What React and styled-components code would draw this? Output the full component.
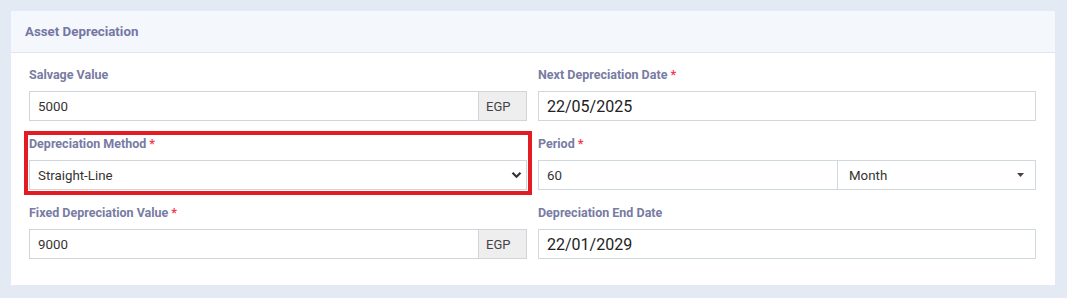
import React from 'react';
import styled, { createGlobalStyle } from 'styled-components';

const GlobalStyle = createGlobalStyle`
  html, body {
    margin: 0;
    padding: 0;
    background: #e4eaf3;
    font-family: Roboto, 'Liberation Sans', Arial, sans-serif;
  }
`;

const Page = styled.div`
  padding: 11px 12px 13px 11px;
`;

const Card = styled.section`
  background: #fff;
`;

const CardHeader = styled.header`
  height: 41px;
  display: flex;
  align-items: center;
  padding: 0 14px;
  background: #f4f8fc;
  border-bottom: 1px solid #e1e7ee;
`;

const Title = styled.h3`
  margin: 0;
  font-size: 13.3px;
  font-weight: 700;
  color: #7477a4;
`;

const CardBody = styled.div`
  display: grid;
  grid-template-columns: 1fr 1fr;
  column-gap: 11px;
  padding: 14px 19px 11px 18px;
`;

const Group = styled.div`
  margin-bottom: 15px;
  ${p =>
    p.$highlight &&
    `
    outline: 4px solid #e31b23;
    outline-offset: 1px;
  `}
`;

const Label = styled.label`
  display: block;
  height: 16px;
  line-height: 16px;
  margin-bottom: 8px;
  font-size: 12.5px;
  font-weight: 700;
  color: #787ba3;
`;

const Req = styled.span`
  color: #ef3b4d;
  margin-left: 3px;
`;

const InputRow = styled.div`
  display: flex;
  height: 30px;
`;

const Field = styled.div`
  flex: ${p => (p.$width ? `0 0 ${p.$width}px` : '1')};
  display: flex;
  align-items: center;
  justify-content: space-between;
  box-sizing: border-box;
  height: 30px;
  padding: 0 ${p => p.$padRight || 8}px 0 8px;
  border: 1px solid ${p => p.$border || '#d0d5dc'};
  margin-left: ${p => (p.$join ? '-1px' : '0')};
  font-size: ${p => (p.$large ? '16px' : '13.3px')};
  color: ${p => (p.$large ? '#222' : '#333')};
  background: #fff;
`;

const Addon = styled.div`
  width: 49px;
  box-sizing: border-box;
  display: flex;
  align-items: center;
  padding-left: 7px;
  margin-left: -1px;
  border: 1px solid #d0d5dc;
  background: #eeeeee;
  font-size: 13px;
  color: #444;
`;

const Chevron = () => (
  <svg width="11" height="8" viewBox="0 0 11 8">
    <path d="M1.5 1.8 L5.5 5.8 L9.5 1.8" fill="none" stroke="#333" strokeWidth="2.2" />
  </svg>
);

const Caret = () => (
  <svg width="7" height="4" viewBox="0 0 7 4">
    <path d="M0 0 H7 L3.5 4 Z" fill="#444" />
  </svg>
);

const App = () => (
  <>
    <GlobalStyle />
    <Page>
      <Card>
        <CardHeader>
          <Title>Asset Depreciation</Title>
        </CardHeader>
        <CardBody>
          <Group>
            <Label>Salvage Value</Label>
            <InputRow>
              <Field>5000</Field>
              <Addon>EGP</Addon>
            </InputRow>
          </Group>
          <Group>
            <Label>
              Next Depreciation Date<Req>*</Req>
            </Label>
            <InputRow>
              <Field $large $border="#cfd8dc">22/05/2025</Field>
            </InputRow>
          </Group>
          <Group $highlight>
            <Label>
              Depreciation Method<Req>*</Req>
            </Label>
            <InputRow>
              <Field $padRight={4}>
                Straight-Line
                <Chevron />
              </Field>
            </InputRow>
          </Group>
          <Group>
            <Label>
              Period<Req>*</Req>
            </Label>
            <InputRow>
              <Field $border="#cfd8dc">60</Field>
              <Field $width={199} $join $border="#cfd8dc" $padRight={11}>
                <span style={{ paddingLeft: 3 }}>Month</span>
                <Caret />
              </Field>
            </InputRow>
          </Group>
          <Group>
            <Label>
              Fixed Depreciation Value<Req>*</Req>
            </Label>
            <InputRow>
              <Field>9000</Field>
              <Addon>EGP</Addon>
            </InputRow>
          </Group>
          <Group>
            <Label>Depreciation End Date</Label>
            <InputRow>
              <Field $large $border="#cfd8dc">22/01/2029</Field>
            </InputRow>
          </Group>
        </CardBody>
      </Card>
    </Page>
  </>
);

export default App;
